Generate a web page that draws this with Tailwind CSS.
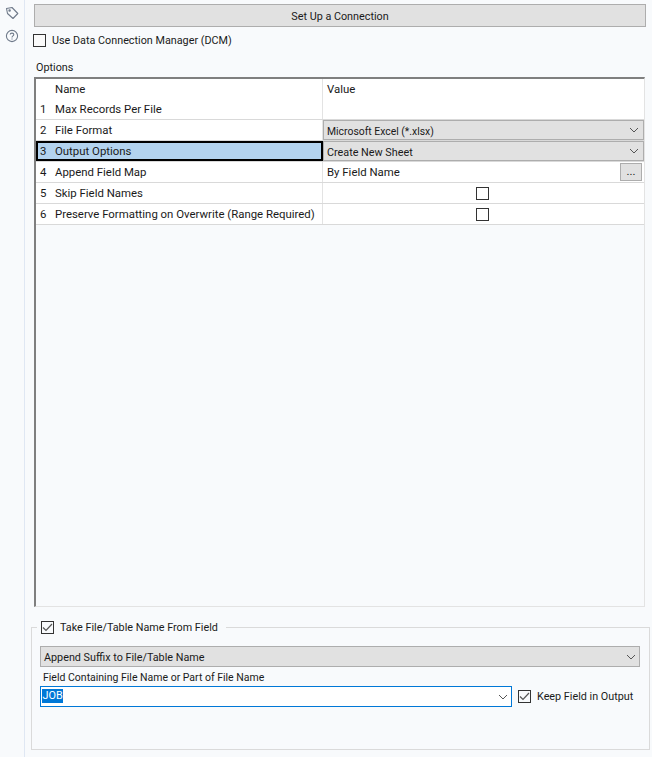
<!DOCTYPE html>
<html lang="en">
<head>
    <meta charset="UTF-8">
    <title>Output Data</title>
    <script src="https://cdn.jsdelivr.net/npm/@tailwindcss/browser@4"></script>
</head>
<body class="bg-[#f8fafc] overflow-hidden">
    <div class="flex w-[652px] h-[757px] font-['Roboto',sans-serif] text-[10.8px] leading-[14px] text-[#1a1a1a]">
        <!-- Left icon rail -->
        <div class="w-[25px] shrink-0 border-r border-[#dfe7f3] flex flex-col items-center pt-[6px] pr-[1px] gap-[9px]">
            <svg width="14" height="14" viewBox="0 0 14 14" fill="none" stroke="#6f7a8a" stroke-width="1.1">
                <path d="M1.5 2.5 L7 1.5 L12.8 7.5 L8 12.5 L2.5 7.5 Z" stroke-linejoin="round"/>
                <circle cx="4.6" cy="4.4" r="0.7"/>
            </svg>
            <svg width="14" height="14" viewBox="0 0 14 14" fill="none" stroke="#6f7a8a" stroke-width="1.1">
                <circle cx="7" cy="7" r="5.6"/>
                <path d="M5.2 5.6 C5.2 3.6 8.8 3.6 8.8 5.6 C8.8 7 7 6.8 7 8.4"/>
                <path d="M7 9.4 V10.5"/>
            </svg>
        </div>

        <!-- Main panel -->
        <div class="flex-1 pl-[9px] pt-[4px] min-w-0">
            <button class="block w-[612px] h-[23px] bg-[#e1e1e1] border border-[#adadad] text-center pt-[2px]">Set Up a Connection</button>

            <div class="flex items-center h-[14px] mt-[6px] -ml-[1px]">
                <span class="w-[13px] h-[13px] border border-[#333] bg-[#fafafa]"></span>
                <span class="ml-[6px] pt-[2px]">Use Data Connection Manager (DCM)</span>
            </div>

            <div class="ml-[2px] mt-[13px] h-[14px] pt-[1px]">Options</div>

            <!-- Options grid -->
            <div class="mt-[3px] w-[611px] h-[530px] border-l-2 border-t-2 border-[#7f7f7f] border-r border-b border-r-[#e3e3e3] border-b-[#e3e3e3]">
                <div class="bg-white whitespace-nowrap text-[11.4px]">
                    <div class="flex h-[20px] items-center">
                        <div class="w-[16px] shrink-0"></div>
                        <div class="w-[271px] shrink-0 h-full flex items-center border-r border-[#e3e3e3] pl-[3px]">Name</div>
                        <div class="flex-1 pl-[4px] h-full flex items-center">Value</div>
                    </div>
                    <div class="flex h-[21px] items-center border-b border-[#d9d9d9]">
                        <div class="w-[16px] shrink-0 pl-[4px]">1</div>
                        <div class="w-[271px] shrink-0 h-full flex items-center border-r border-[#e3e3e3] pl-[3px]">Max Records Per File</div>
                        <div class="flex-1"></div>
                    </div>
                    <div class="flex h-[21px] items-center border-b border-[#d9d9d9]">
                        <div class="w-[16px] shrink-0 pl-[4px]">2</div>
                        <div class="w-[271px] shrink-0 h-full flex items-center border-r border-[#e3e3e3] pl-[3px]">File Format</div>
                        <div class="flex-1 h-full flex items-center justify-between bg-[#e1e1e1] border border-[#adadad] pl-[3px] pr-[4px]">
                            <span class="text-[10.4px] pt-[3px]">Microsoft Excel (*.xlsx)</span>
                            <svg width="10" height="6" viewBox="0 0 10 6" fill="none" stroke="#555" stroke-width="1"><path d="M1 1 L5 5 L9 1"/></svg>
                        </div>
                    </div>
                    <div class="flex h-[21px] items-center border-b border-[#d9d9d9]">
                        <div class="w-[16px] shrink-0 h-full bg-[#b3d3ef] border-2 border-r-0 border-black pl-[2px] flex items-center">3</div>
                        <div class="w-[271px] shrink-0 h-full flex items-center bg-[#b3d3ef] border-y-2 border-r-2 border-black pl-[3px]">Output Options</div>
                        <div class="flex-1 h-full flex items-center justify-between bg-[#e1e1e1] border border-[#adadad] pl-[3px] pr-[4px]">
                            <span class="text-[10.8px] pt-[3px]">Create New Sheet</span>
                            <svg width="10" height="6" viewBox="0 0 10 6" fill="none" stroke="#555" stroke-width="1"><path d="M1 1 L5 5 L9 1"/></svg>
                        </div>
                    </div>
                    <div class="flex h-[21px] items-center border-b border-[#d9d9d9]">
                        <div class="w-[16px] shrink-0 pl-[4px]">4</div>
                        <div class="w-[271px] shrink-0 h-full flex items-center border-r border-[#e3e3e3] pl-[3px]">Append Field Map</div>
                        <div class="flex-1 h-full flex items-center justify-between pl-[4px] pr-[2px]">
                            <span>By Field Name</span>
                            <span class="w-[22px] h-[18px] bg-[#e1e1e1] border border-[#adadad] flex items-center justify-center leading-none">...</span>
                        </div>
                    </div>
                    <div class="flex h-[21px] items-center border-b border-[#d9d9d9]">
                        <div class="w-[16px] shrink-0 pl-[4px]">5</div>
                        <div class="w-[271px] shrink-0 h-full flex items-center border-r border-[#e3e3e3] pl-[3px]">Skip Field Names</div>
                        <div class="flex-1 flex justify-center pr-[3px]"><span class="w-[13px] h-[13px] border border-[#333]"></span></div>
                    </div>
                    <div class="flex h-[21px] items-center border-b border-[#d9d9d9]">
                        <div class="w-[16px] shrink-0 pl-[4px]">6</div>
                        <div class="w-[271px] shrink-0 h-full flex items-center border-r border-[#e3e3e3] pl-[3px]">Preserve Formatting on Overwrite (Range Required)</div>
                        <div class="flex-1 flex justify-center pr-[3px]"><span class="w-[13px] h-[13px] border border-[#333]"></span></div>
                    </div>
                </div>
            </div>

            <!-- Take name from field group -->
            <div class="relative -ml-[3px] mt-[20px] w-[619px] h-[123px] border border-[#dadada] pt-[18px] pl-[8px]">
                <div class="absolute -top-[8px] left-[5px] flex items-center bg-[#f8fafc] pl-[4px] pr-[8px] h-[14px]">
                    <span class="w-[13px] h-[13px] border border-[#333] flex items-center justify-center">
                        <svg width="11" height="9" viewBox="0 0 11 9" fill="none" stroke="#555" stroke-width="1.2"><path d="M1 4.5 L4 7.5 L10 1"/></svg>
                    </span>
                    <span class="ml-[6px] pt-[2px]">Take File/Table Name From Field</span>
                </div>

                <div class="w-[600px] h-[21px] flex items-center justify-between bg-[#e1e1e1] border border-[#adadad] pl-[3px] pr-[3px]">
                    <span class="pt-[2px]">Append Suffix to File/Table Name</span>
                    <svg width="10" height="6" viewBox="0 0 10 6" fill="none" stroke="#555" stroke-width="1"><path d="M1 1 L5 5 L9 1"/></svg>
                </div>
                <div class="mt-[2px] h-[16px] pl-[3px] pt-[2px] flex items-center text-[10.5px]">Field Containing File Name or Part of File Name</div>
                <div class="flex items-center mt-[1px]">
                    <div class="w-[472px] h-[21px] flex items-center justify-between bg-white border border-[#0078d7] pl-[1px] pr-[3px]">
                        <span class="bg-[#0078d7] text-white leading-[14px] px-[0.5px] -mt-[1px]">JOB</span>
                        <svg width="10" height="6" viewBox="0 0 10 6" fill="none" stroke="#555" stroke-width="1"><path d="M1 1 L5 5 L9 1"/></svg>
                    </div>
                    <span class="ml-[6px] w-[13px] h-[13px] border border-[#333] flex items-center justify-center">
                        <svg width="11" height="9" viewBox="0 0 11 9" fill="none" stroke="#555" stroke-width="1.2"><path d="M1 4.5 L4 7.5 L10 1"/></svg>
                    </span>
                    <span class="ml-[6px]">Keep Field in Output</span>
                </div>
            </div>
        </div>
    </div>
</body>
</html>
